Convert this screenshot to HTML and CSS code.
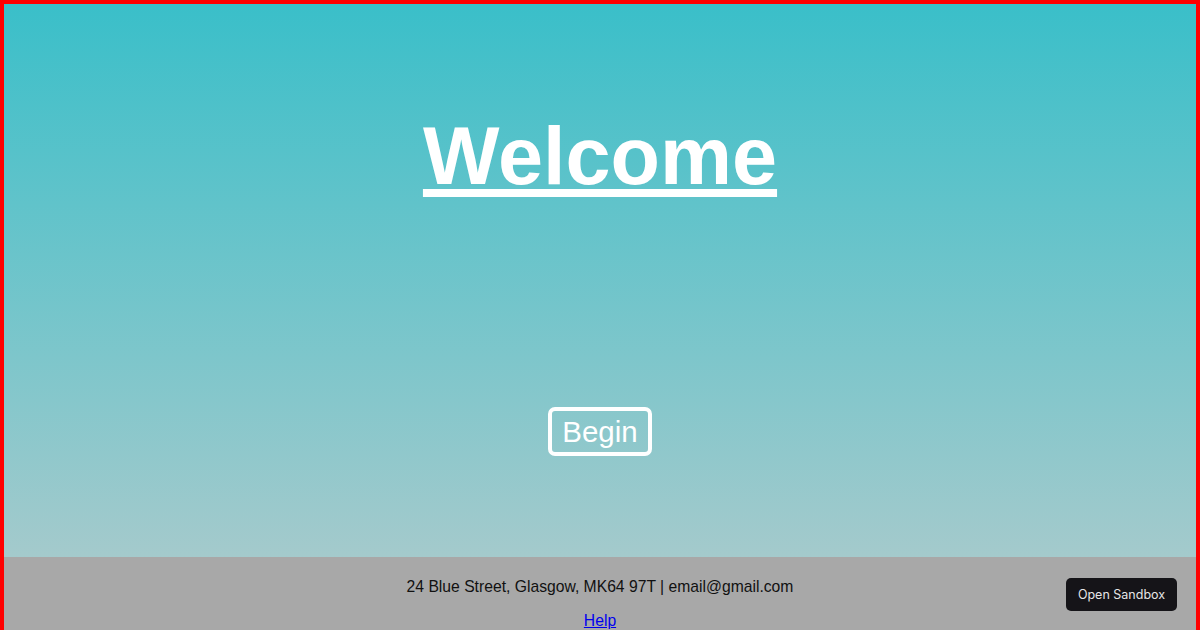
FILE: index.html
```html
<!DOCTYPE html>
<html lang="en">
<head>
<meta charset="utf-8">
<title>Welcome</title>
<link rel="stylesheet" href="styles.css">
</head>
<body>
<div class="page">
  <main class="hero">
    <h1 class="title">Welcome</h1>
    <button class="begin" type="button">Begin</button>
  </main>
  <footer class="footer">
    <p class="contact">24 Blue Street, Glasgow, MK64 97T | email@gmail.com</p>
    <p class="help"><a href="#">Help</a></p>
  </footer>
</div>
<a class="sandbox" href="#">Open Sandbox</a>
</body>
</html>
```

FILE: styles.css
```css
html, body {
  margin: 0;
  padding: 0;
}
body {
  font-family: "Liberation Sans", Arial, sans-serif;
  overflow: hidden;
  height: 630px;
}
.page {
  border: 4px solid #ff0000;
  display: flex;
  flex-direction: column;
}
.hero {
  height: 553px;
  background: linear-gradient(to bottom, #3abfc9, #a4cacc);
  display: flex;
  flex-direction: column;
  align-items: center;
}
.title {
  margin: 106px 0 0;
  font-size: 81px;
  font-weight: bold;
  color: #ffffff;
  text-decoration: underline;
  line-height: 93px;
}
.begin {
  margin-top: 204px;
  background: transparent;
  border: 4px solid #ffffff;
  border-radius: 7px;
  color: #ffffff;
  font-family: "Liberation Sans", Arial, sans-serif;
  font-size: 29.5px;
  line-height: 33px;
  padding: 4px 10px 4px;
  cursor: pointer;
}
.footer {
  background: #a8a8a8;
  padding: 5px 0 20px;
  text-align: center;
  font-size: 15.7px;
  color: #111111;
}
.footer p {
  margin: 16px 0;
  line-height: 18px;
}
.help a {
  color: #0000ee;
}
.sandbox {
  position: fixed;
  top: 578px;
  right: 23px;
  width: 111px;
  height: 33px;
  box-sizing: border-box;
  display: flex;
  align-items: center;
  justify-content: center;
  background: #151418;
  color: #e6e6e6;
  border-radius: 5px;
  font-family: Inter, "Liberation Sans", sans-serif;
  font-size: 12.5px;
  text-decoration: none;
}
```
